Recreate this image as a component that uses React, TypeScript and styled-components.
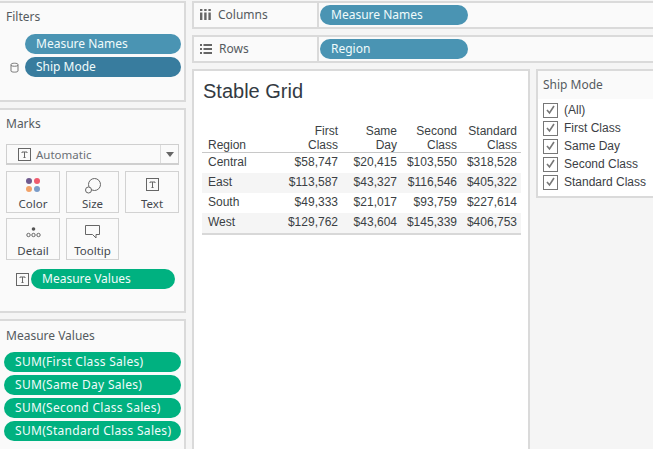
import React from "react";
import styled, { createGlobalStyle } from "styled-components";

const Global = createGlobalStyle`
  html, body { margin: 0; padding: 0; background: #f5f5f5; }
  body { width: 653px; height: 449px; overflow: hidden; font-family: "Noto Sans", sans-serif; }
  * { box-sizing: border-box; }
`;
const Page = styled.div`
  display: grid; grid-template-columns: 186px 1fr; column-gap: 6px;
  width: 653px; height: 449px; overflow: hidden; padding-top: 1px;
`;
const LeftColumn = styled.div`display: flex; flex-direction: column; gap: 6px; height: 448px;`;
const RightColumn = styled.div`display: flex; flex-direction: column; gap: 6px; height: 448px; min-width: 0;`;
const Card = styled.section<{ $h?: number; $grow?: boolean }>`
  background: #fafafa; border: 2px solid #dadada; border-left: none;
  ${p => p.$h ? `height: ${p.$h}px;` : ""}
  ${p => p.$grow ? "flex: 1; border-bottom: none; padding-top: 7px !important;" : ""}
  padding: 6px 3px 0 6px;
`;
const CardTitle = styled.div`font-size: 12px; line-height: 16px; color: #555a60;`;
const PillRow = styled.div`display: flex; align-items: center; height: 20px; margin-bottom: 3px;`;
const IconSlot = styled.div<{ $w: number; $pr?: number }>`
  width: ${p => p.$w}px; flex: none; display: flex; align-items: center; justify-content: center;
  padding-right: ${p => p.$pr ?? 0}px;
`;
const Pill = styled.div<{ $bg: string; $w?: number; $spaced?: boolean }>`
  background: ${p => p.$bg}; color: #f0fbfb; height: 20px; border-radius: 10px;
  font-size: 12px; line-height: 19px; padding-left: 11px; white-space: nowrap;
  letter-spacing: ${p => p.$spaced ? "0.3px" : "0"};
  ${p => p.$w ? `width: ${p.$w}px; flex: none;` : "flex: 1;"}
`;
const FilterList = styled.div`margin-top: 9px;`;
const Select = styled.div`
  display: flex; align-items: center; height: 21px; margin-top: 12px; width: 173px;
  background: #fafafa; border: 1px solid #cfcfcf; border-bottom-width: 2px; font-size: 11.5px; color: #6a6f75;
`;
const SelectLabel = styled.div`flex: 1; display: flex; align-items: center; gap: 5px; padding-left: 11px;`;
const SelectArrow = styled.div`
  width: 18px; height: 100%; border-left: 1px solid #dcdcdc; display: flex; align-items: center; justify-content: center;
  &::after { content: ""; border: 4px solid transparent; border-top: 5px solid #666; border-bottom: none; }
`;
const MarkGrid = styled.div`display: grid; grid-template-columns: 54px 53px 54px; column-gap: 6px; row-gap: 5px; margin-top: 6px;`;
const MarkButton = styled.div`
  height: 42px; border: 1px solid #d2d2d2; display: flex; flex-direction: column; align-items: center;
  font-size: 11.5px; line-height: 14px; color: #44484d; padding-top: 6px;
`;
const MarkIcon = styled.div`height: 19px; display: flex; align-items: flex-start; justify-content: center;`;
const MarkLabel = styled.div``;
const MarkPillRow = styled.div`display: flex; align-items: center; margin-top: 9px; margin-left: 7px;`;
const MeasureList = styled.div`margin-top: 8px; margin-left: -2px;`;
const ShelfBar = styled.div`
  display: flex; height: 28px; background: #fafafa; border: 2px solid #dadada; border-right: none; align-items: center;
`;
const ShelfHead = styled.div`
  width: 125px; height: 100%; flex: none; border-right: 2px solid #dadada;
  display: flex; align-items: center; gap: 7px; padding-left: 6px; padding-bottom: 1px; font-size: 12px; color: #555a60;
`;
const ShelfBody = styled.div`padding-left: 1px;`;
const Main = styled.div`display: flex; gap: 6px; flex: 1; min-height: 0;`;
const Sheet = styled.div`
  width: 338px; flex: none; background: #fff; border: 2px solid #dadada; border-bottom: none; padding: 6px 7px 0 8px;
  font-family: "Liberation Sans", sans-serif;
`;
const SheetTitle = styled.div`font-size: 20px; line-height: 28px; color: #333a42; padding-left: 1px;`;
const Table = styled.table`
  border-collapse: collapse; width: 319px; margin-top: 19px; font-size: 12px; color: #3b3f44; table-layout: fixed;
  border-bottom: 2px solid #d8d8d8;
`;
const HeadRow = styled.tr`border-bottom: 1px solid #c8c8c8;`;
const Th = styled.th<{ $left?: boolean; $w: number }>`
  font-weight: normal; text-align: ${p => p.$left ? "left" : "right"}; vertical-align: bottom; width: ${p => p.$w}px;
  padding: 0 4px 0 ${p => p.$left ? 6 : 0}px; line-height: 14px; height: 28px;
`;
const Tr = styled.tr<{ $alt?: boolean }>`background: ${p => p.$alt ? "#f5f5f5" : "#fff"}; height: 20px;`;
const Td = styled.td<{ $left?: boolean }>`
  text-align: ${p => p.$left ? "left" : "right"}; padding: 0 4px 1px ${p => p.$left ? 6 : 0}px; line-height: 19px; white-space: nowrap;
`;
const ShipCard = styled.aside`
  flex: 1; height: 129px; background: #fff; border: 2px solid #dadada; border-right: none;
  display: flex; flex-direction: column;
`;
const ShipTitle = styled.div`height: 28px; background: #fafafa; padding: 6px 0 0 5px; font-size: 12px; line-height: 16px; color: #555a60;`;
const ShipList = styled.div`padding: 2px 0 0 5px;`;
const ShipItem = styled.div`display: flex; align-items: center; gap: 6px; height: 18px; font-size: 12px; color: #3c4045; white-space: nowrap; font-family: "Liberation Sans", sans-serif;`;
const Box = styled.div`width: 15px; height: 15px; border: 1px solid #777; flex: none; background: #fff; display: flex; align-items: center; justify-content: center;`;

const TIcon = ({ s = 13 }: { s?: number }) => (
  <svg width={s} height={s} viewBox="0 0 13 13" fill="none" stroke="#666">
    <rect x="0.5" y="0.5" width="12" height="12" />
    <path d="M4 4h5M6.5 4v5.5M5.5 9.5h2M4 4v1M9 4v1" />
  </svg>
);
const DbIcon = () => (
  <svg width="9" height="11" viewBox="0 0 9 11" fill="none" stroke="#777">
    <path d="M1 2.5C1 .8 8 .8 8 2.5V9c0 1.5-7 1.5-7 0ZM1 3.5c1.5 1 5.5 1 7 0" />
  </svg>
);
const ColorIcon = () => (
  <svg width="14" height="14" viewBox="0 0 14 14">
    <circle cx="3" cy="3" r="3" fill="#6f5a8e" /><circle cx="11" cy="3" r="3" fill="#ef5b6e" />
    <circle cx="3" cy="11" r="3" fill="#f2a268" /><circle cx="11" cy="11" r="3" fill="#7b9cc9" />
  </svg>
);
const SizeIcon = () => (
  <svg width="16" height="16" viewBox="0 0 16 16" fill="none" stroke="#666">
    <circle cx="9.5" cy="6.5" r="6" /><circle cx="3.5" cy="12" r="3" fill="#fafafa" />
  </svg>
);
const DetailIcon = () => (
  <svg width="15" height="14" viewBox="0 0 15 14" fill="none" stroke="#666">
    <circle cx="7.5" cy="4" r="1.8" fill="#555" stroke="none" />
    <circle cx="2.5" cy="10" r="1.7" /><circle cx="7.5" cy="10" r="1.7" /><circle cx="12.5" cy="10" r="1.7" />
  </svg>
);
const TipIcon = () => (
  <svg width="15" height="14" viewBox="0 0 15 14" fill="none" stroke="#666">
    <path d="M.5.5h14v9H11V13L7.5 9.5H.5Z" />
  </svg>
);
const ColsIcon = () => (
  <svg width="11" height="11" viewBox="0 0 11 11" fill="#666">
    <rect x="0" y="0" width="2.4" height="2" /><rect x="4.2" y="0" width="2.4" height="2" /><rect x="8.4" y="0" width="2.4" height="2" />
    <rect x="0" y="3.5" width="2.4" height="7.5" /><rect x="4.2" y="3.5" width="2.4" height="7.5" /><rect x="8.4" y="3.5" width="2.4" height="7.5" />
  </svg>
);
const RowsIcon = () => (
  <svg width="12" height="10" viewBox="0 0 12 10" fill="#666">
    <rect x="0" y="0" width="2" height="2" /><rect x="3.5" y="0" width="8.5" height="2" />
    <rect x="0" y="4" width="2" height="2" /><rect x="3.5" y="4" width="8.5" height="2" />
    <rect x="0" y="8" width="2" height="2" /><rect x="3.5" y="8" width="8.5" height="2" />
  </svg>
);
const Check = () => (
  <svg width="11" height="10" viewBox="0 0 11 10" fill="none" stroke="#777" strokeWidth="1.6">
    <path d="M2 5l2.5 3L9 1" />
  </svg>
);

const rows = [
  ["Central", "$58,747", "$20,415", "$103,550", "$318,528"],
  ["East", "$113,587", "$43,327", "$116,546", "$405,322"],
  ["South", "$49,333", "$21,017", "$93,759", "$227,614"],
  ["West", "$129,762", "$43,604", "$145,339", "$406,753"],
];
const marks = [
  { label: "Color", icon: <ColorIcon /> },
  { label: "Size", icon: <SizeIcon /> },
  { label: "Text", icon: <TIcon /> },
  { label: "Detail", icon: <DetailIcon /> },
  { label: "Tooltip", icon: <TipIcon /> },
];
const measures = ["SUM(First Class Sales)", "SUM(Same Day Sales)", "SUM(Second Class Sales)", "SUM(Standard Class Sales)"];
const ship = ["(All)", "First Class", "Same Day", "Second Class", "Standard Class"];

export default function App() {
  return (
    <Page>
      <Global />
      <LeftColumn>
        <Card $h={101}>
          <CardTitle>Filters</CardTitle>
          <FilterList>
            <PillRow><IconSlot $w={19} /><Pill $bg="#4a94b3">Measure Names</Pill></PillRow>
            <PillRow><IconSlot $w={19} $pr={3}><DbIcon /></IconSlot><Pill $bg="#387c9e">Ship Mode</Pill></PillRow>
          </FilterList>
        </Card>
        <Card $h={205}>
          <CardTitle>Marks</CardTitle>
          <Select>
            <SelectLabel><TIcon />Automatic</SelectLabel>
            <SelectArrow />
          </Select>
          <MarkGrid>
            {marks.map(m => (
              <MarkButton key={m.label}>
                <MarkIcon>{m.icon}</MarkIcon>
                <MarkLabel>{m.label}</MarkLabel>
              </MarkButton>
            ))}
          </MarkGrid>
          <MarkPillRow>
            <IconSlot $w={18}><TIcon /></IconSlot>
            <Pill $bg="#00b180" $w={144}>Measure Values</Pill>
          </MarkPillRow>
        </Card>
        <Card $grow>
          <CardTitle>Measure Values</CardTitle>
          <MeasureList>
            {measures.map(m => <PillRow key={m}><Pill $bg="#00b180" $spaced>{m}</Pill></PillRow>)}
          </MeasureList>
        </Card>
      </LeftColumn>
      <RightColumn>
        <ShelfBar>
          <ShelfHead><ColsIcon />Columns</ShelfHead>
          <ShelfBody><Pill $bg="#4a94b3" $w={148}>Measure Names</Pill></ShelfBody>
        </ShelfBar>
        <ShelfBar>
          <ShelfHead><RowsIcon />Rows</ShelfHead>
          <ShelfBody><Pill $bg="#4a94b3" $w={148}>Region</Pill></ShelfBody>
        </ShelfBar>
        <Main>
          <Sheet>
            <SheetTitle>Stable Grid</SheetTitle>
            <Table>
              <thead>
                <HeadRow>
                  <Th $left $w={80}>Region</Th>
                  <Th $w={60}>First<br />Class</Th>
                  <Th $w={59}>Same<br />Day</Th>
                  <Th $w={60}>Second<br />Class</Th>
                  <Th $w={60}>Standard<br />Class</Th>
                </HeadRow>
              </thead>
              <tbody>
                {rows.map((r, i) => (
                  <Tr key={r[0]} $alt={i % 2 === 1}>
                    {r.map((c, j) => <Td key={j} $left={j === 0}>{c}</Td>)}
                  </Tr>
                ))}
              </tbody>
            </Table>
          </Sheet>
          <ShipCard>
            <ShipTitle>Ship Mode</ShipTitle>
            <ShipList>
              {ship.map(s => <ShipItem key={s}><Box><Check /></Box>{s}</ShipItem>)}
            </ShipList>
          </ShipCard>
        </Main>
      </RightColumn>
    </Page>
  );
}
